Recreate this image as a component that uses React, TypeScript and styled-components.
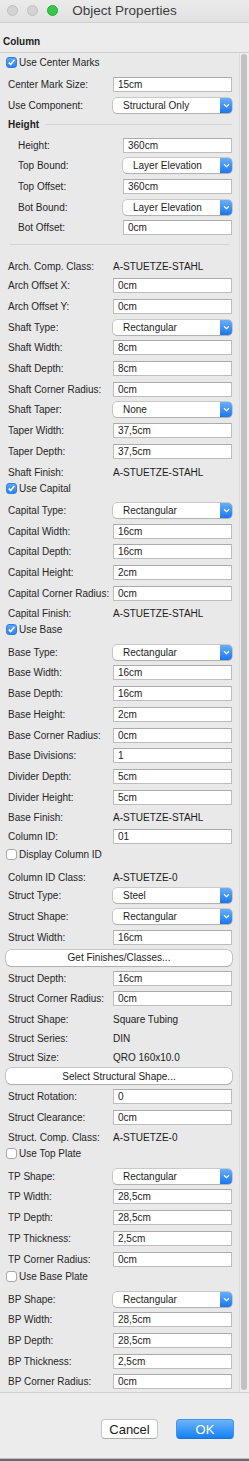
import React from 'react';
import styled, { createGlobalStyle } from 'styled-components';

const GlobalStyle = createGlobalStyle`
    html, body {
        margin: 0;
        padding: 0;
        background: #ececec;
    }
    body {
        font-family: 'Liberation Sans', Arial, sans-serif;
        color: #262626;
    }
`;

const Window = styled.div`
    width: 249px;
    height: 1461px;
    display: flex;
    flex-direction: column;
    background: #ececec;
    overflow: hidden;
`;

const TitleBar = styled.div`
    height: 23px;
    flex: none;
    box-sizing: border-box;
    display: grid;
    grid-template-columns: 1fr auto 1fr;
    align-items: center;
    background: linear-gradient(#ebebeb, #e1e1e1);
    border-bottom: 1px solid #cfcfcf;
`;

const Lights = styled.div`
    display: flex;
    gap: 9px;
    padding-left: 7px;
    padding-bottom: 1px;
`;

const Light = styled.span<{ $color: string; $edge: string }>`
    width: 11px;
    height: 11px;
    border-radius: 50%;
    box-sizing: border-box;
    background: ${(p) => p.$color};
    border: 1px solid ${(p) => p.$edge};
`;

const Title = styled.div`
    font-size: 13.5px;
    color: #3c3c3c;
    padding-bottom: 1px;
`;

const Header = styled.div`
    height: 29px;
    flex: none;
    box-sizing: border-box;
    display: flex;
    align-items: flex-end;
    padding: 0 0 4px 3px;
    font-size: 10px;
    line-height: 12px;
    font-weight: bold;
    color: #1e1e1e;
`;

const Panel = styled.div`
    flex: 1;
    min-height: 0;
    display: flex;
    background: #e9e9e9;
    border-top: 1px solid #d0d0d0;
    border-bottom: 1px solid #d0d0d0;
    overflow: hidden;
`;

const Content = styled.div`
    flex: 1;
    min-width: 0;
    display: flex;
    flex-direction: column;
    padding-top: 2px;
`;

const Track = styled.div`
    width: 10px;
    flex: none;
    box-sizing: border-box;
    border-left: 1px solid #dcdcdc;
    background: #eeeeee;
    padding: 1px 0 2px 1px;
    display: flex;
`;

const Thumb = styled.div`
    width: 6px;
    flex: none;
    border-radius: 3px;
    background: #c2c2c2;
`;

const Row = styled.div<{ $indent?: boolean }>`
    height: 20.7px;
    flex: none;
    display: flex;
    align-items: center;
    padding: 0 7px 0 ${(p) => (p.$indent ? 18 : 8)}px;
`;

const InfoRow = styled.div`
    height: 19px;
    flex: none;
    box-sizing: border-box;
    display: flex;
    align-items: center;
    padding: 2px 7px 0 8px;
`;

const Label = styled.span`
    flex: 0 0 105px;
    font-size: 10px;
    white-space: nowrap;
    color: #262626;
`;

const Value = styled.span`
    flex: 1;
    min-width: 0;
    font-size: 10px;
    color: #1c1c1c;
`;

const TextInput = styled.input`
    flex: 1;
    min-width: 0;
    width: 0;
    height: 15px;
    box-sizing: border-box;
    margin: 0;
    padding: 0 0 0 4px;
    border: 1px solid #bdbdbd;
    border-top-color: #ababab;
    background: #fff;
    font: 10px 'Liberation Sans', Arial, sans-serif;
    color: #1c1c1c;
    outline: none;
`;

const Select = styled.div`
    flex: 1;
    min-width: 0;
    height: 15px;
    display: flex;
    align-items: center;
    background: #fff;
    border-radius: 4px;
    box-shadow: 0 0 0 0.5px rgba(0, 0, 0, 0.28), 0 1px 1px rgba(0, 0, 0, 0.12);
    font-size: 10px;
    color: #1c1c1c;
`;

const SelectText = styled.span`
    flex: 1;
    min-width: 0;
    padding-left: 10px;
    white-space: nowrap;
`;

const SelectArrow = styled.span`
    width: 12px;
    flex: none;
    align-self: stretch;
    display: flex;
    align-items: center;
    justify-content: center;
    border-radius: 0 4px 4px 0;
    background: linear-gradient(#67affa, #1c76ec);
`;

const CheckRow = styled.label`
    height: 19.5px;
    flex: none;
    box-sizing: border-box;
    display: flex;
    align-items: flex-start;
    padding: 1px 0 0 6px;
    font-size: 10px;
    line-height: 13px;
    color: #262626;
`;

const Box = styled.span<{ $checked: boolean }>`
    width: 11px;
    height: 11px;
    margin: 1px 2px 0 0;
    box-sizing: border-box;
    border-radius: 3px;
    display: flex;
    align-items: center;
    justify-content: center;
    background: ${(p) => (p.$checked ? 'linear-gradient(#58a6fa, #2e82f3)' : '#fff')};
    border: 1px solid ${(p) => (p.$checked ? '#2f7fe6' : '#a8a8a8')};
`;

const Heading = styled.div`
    height: 19px;
    flex: none;
    box-sizing: border-box;
    display: flex;
    align-items: center;
    gap: 6px;
    padding: 0 7px 2px 8px;
    font-size: 10px;
    font-weight: bold;
    color: #1e1e1e;
`;

const HeadingLine = styled.span`
    flex: 1;
    height: 1px;
    background: #d6d6d6;
`;

const Divider = styled.div`
    flex: none;
    height: 1px;
    margin: 6px 10px 11px;
    background: #d3d3d3;
`;

const ButtonRow = styled.div`
    height: 20px;
    flex: none;
    display: flex;
    align-items: center;
    padding: 0 7px 0 6px;
`;

const WideButton = styled.button`
    flex: 1;
    min-width: 0;
    height: 16px;
    margin: 0;
    padding: 0;
    border: none;
    border-radius: 5px;
    background: #fff;
    box-shadow: 0 0 0 0.5px rgba(0, 0, 0, 0.3), 0 1px 1px rgba(0, 0, 0, 0.12);
    font: 10px 'Liberation Sans', Arial, sans-serif;
    color: #1c1c1c;
`;

const Footer = styled.div`
    height: 66px;
    flex: none;
    box-sizing: border-box;
    display: flex;
    justify-content: flex-end;
    align-items: flex-start;
    gap: 18px;
    padding: 26px 15px 0 0;
    border-bottom: 1px solid #bdbdbd;
`;

const DialogButton = styled.button<{ $primary?: boolean }>`
    width: ${(p) => (p.$primary ? 58 : 57)}px;
    height: 20px;
    margin: 0;
    padding: 0;
    border-radius: 4px;
    font: 13px 'Liberation Sans', Arial, sans-serif;
    color: ${(p) => (p.$primary ? '#fff' : '#1a1a1a')};
    background: ${(p) => (p.$primary ? 'linear-gradient(#6cb4fb, #1580f6)' : '#fff')};
    border: 1px solid ${(p) => (p.$primary ? '#3f92f2' : '#c6c6c6')};
    border-bottom-color: ${(p) => (p.$primary ? '#1f6fd6' : '#ababab')};
`;

const DesktopEdge = styled.div`
    height: 2px;
    flex: none;
    background: #6a6a6a;
`;

type Item =
    | { kind: 'field'; label: string; value: string; indent?: boolean }
    | { kind: 'select'; label: string; value: string; indent?: boolean }
    | { kind: 'info'; label: string; value: string }
    | { kind: 'check'; label: string; checked: boolean }
    | { kind: 'button'; label: string }
    | { kind: 'heading'; label: string }
    | { kind: 'divider' };

const items: Item[] = [
    { kind: 'check', label: 'Use Center Marks', checked: true },
    { kind: 'field', label: 'Center Mark Size:', value: '15cm' },
    { kind: 'select', label: 'Use Component:', value: 'Structural Only' },
    { kind: 'heading', label: 'Height' },
    { kind: 'field', label: 'Height:', value: '360cm', indent: true },
    { kind: 'select', label: 'Top Bound:', value: 'Layer Elevation', indent: true },
    { kind: 'field', label: 'Top Offset:', value: '360cm', indent: true },
    { kind: 'select', label: 'Bot Bound:', value: 'Layer Elevation', indent: true },
    { kind: 'field', label: 'Bot Offset:', value: '0cm', indent: true },
    { kind: 'divider' },
    { kind: 'info', label: 'Arch. Comp. Class:', value: 'A-STUETZE-STAHL' },
    { kind: 'field', label: 'Arch Offset X:', value: '0cm' },
    { kind: 'field', label: 'Arch Offset Y:', value: '0cm' },
    { kind: 'select', label: 'Shaft Type:', value: 'Rectangular' },
    { kind: 'field', label: 'Shaft Width:', value: '8cm' },
    { kind: 'field', label: 'Shaft Depth:', value: '8cm' },
    { kind: 'field', label: 'Shaft Corner Radius:', value: '0cm' },
    { kind: 'select', label: 'Shaft Taper:', value: 'None' },
    { kind: 'field', label: 'Taper Width:', value: '37,5cm' },
    { kind: 'field', label: 'Taper Depth:', value: '37,5cm' },
    { kind: 'info', label: 'Shaft Finish:', value: 'A-STUETZE-STAHL' },
    { kind: 'check', label: 'Use Capital', checked: true },
    { kind: 'select', label: 'Capital Type:', value: 'Rectangular' },
    { kind: 'field', label: 'Capital Width:', value: '16cm' },
    { kind: 'field', label: 'Capital Depth:', value: '16cm' },
    { kind: 'field', label: 'Capital Height:', value: '2cm' },
    { kind: 'field', label: 'Capital Corner Radius:', value: '0cm' },
    { kind: 'info', label: 'Capital Finish:', value: 'A-STUETZE-STAHL' },
    { kind: 'check', label: 'Use Base', checked: true },
    { kind: 'select', label: 'Base Type:', value: 'Rectangular' },
    { kind: 'field', label: 'Base Width:', value: '16cm' },
    { kind: 'field', label: 'Base Depth:', value: '16cm' },
    { kind: 'field', label: 'Base Height:', value: '2cm' },
    { kind: 'field', label: 'Base Corner Radius:', value: '0cm' },
    { kind: 'field', label: 'Base Divisions:', value: '1' },
    { kind: 'field', label: 'Divider Depth:', value: '5cm' },
    { kind: 'field', label: 'Divider Height:', value: '5cm' },
    { kind: 'info', label: 'Base Finish:', value: 'A-STUETZE-STAHL' },
    { kind: 'field', label: 'Column ID:', value: '01' },
    { kind: 'check', label: 'Display Column ID', checked: false },
    { kind: 'info', label: 'Column ID Class:', value: 'A-STUETZE-0' },
    { kind: 'select', label: 'Struct Type:', value: 'Steel' },
    { kind: 'select', label: 'Struct Shape:', value: 'Rectangular' },
    { kind: 'field', label: 'Struct Width:', value: '16cm' },
    { kind: 'button', label: 'Get Finishes/Classes...' },
    { kind: 'field', label: 'Struct Depth:', value: '16cm' },
    { kind: 'field', label: 'Struct Corner Radius:', value: '0cm' },
    { kind: 'info', label: 'Struct Shape:', value: 'Square Tubing' },
    { kind: 'info', label: 'Struct Series:', value: 'DIN' },
    { kind: 'info', label: 'Struct Size:', value: 'QRO 160x10.0' },
    { kind: 'button', label: 'Select Structural Shape...' },
    { kind: 'field', label: 'Struct Rotation:', value: '0' },
    { kind: 'field', label: 'Struct Clearance:', value: '0cm' },
    { kind: 'info', label: 'Struct. Comp. Class:', value: 'A-STUETZE-0' },
    { kind: 'check', label: 'Use Top Plate', checked: false },
    { kind: 'select', label: 'TP Shape:', value: 'Rectangular' },
    { kind: 'field', label: 'TP Width:', value: '28,5cm' },
    { kind: 'field', label: 'TP Depth:', value: '28,5cm' },
    { kind: 'field', label: 'TP Thickness:', value: '2,5cm' },
    { kind: 'field', label: 'TP Corner Radius:', value: '0cm' },
    { kind: 'check', label: 'Use Base Plate', checked: false },
    { kind: 'select', label: 'BP Shape:', value: 'Rectangular' },
    { kind: 'field', label: 'BP Width:', value: '28,5cm' },
    { kind: 'field', label: 'BP Depth:', value: '28,5cm' },
    { kind: 'field', label: 'BP Thickness:', value: '2,5cm' },
    { kind: 'field', label: 'BP Corner Radius:', value: '0cm' },
];

function Chevron() {
    return (
        <svg width="7" height="5" viewBox="0 0 7 5">
            <path d="M1 1.2 L3.5 3.7 L6 1.2" fill="none" stroke="#fff" strokeWidth="1.3" />
        </svg>
    );
}

function Tick() {
    return (
        <svg width="9" height="9" viewBox="0 0 9 9">
            <path d="M1.8 4.6 L3.7 6.6 L7.3 2.1" fill="none" stroke="#fff" strokeWidth="1.6" />
        </svg>
    );
}

function renderItem(item: Item, i: number) {
    switch (item.kind) {
        case 'field':
            return (
                <Row key={i} $indent={item.indent}>
                    <Label>{item.label}</Label>
                    <TextInput readOnly value={item.value} />
                </Row>
            );
        case 'select':
            return (
                <Row key={i} $indent={item.indent}>
                    <Label>{item.label}</Label>
                    <Select>
                        <SelectText>{item.value}</SelectText>
                        <SelectArrow>
                            <Chevron />
                        </SelectArrow>
                    </Select>
                </Row>
            );
        case 'info':
            return (
                <InfoRow key={i}>
                    <Label>{item.label}</Label>
                    <Value>{item.value}</Value>
                </InfoRow>
            );
        case 'check':
            return (
                <CheckRow key={i}>
                    <Box $checked={item.checked}>{item.checked && <Tick />}</Box>
                    {item.label}
                </CheckRow>
            );
        case 'button':
            return (
                <ButtonRow key={i}>
                    <WideButton>{item.label}</WideButton>
                </ButtonRow>
            );
        case 'heading':
            return (
                <Heading key={i}>
                    {item.label}
                    <HeadingLine />
                </Heading>
            );
        case 'divider':
            return <Divider key={i} />;
    }
}

export default function App() {
    return (
        <>
            <GlobalStyle />
            <Window>
                <TitleBar>
                    <Lights>
                        <Light $color="#d3d3d3" $edge="#c0c0c0" />
                        <Light $color="#d3d3d3" $edge="#c0c0c0" />
                        <Light $color="#35c84a" $edge="#27a93a" />
                    </Lights>
                    <Title>Object Properties</Title>
                </TitleBar>
                <Header>Column</Header>
                <Panel>
                    <Content>{items.map(renderItem)}</Content>
                    <Track>
                        <Thumb />
                    </Track>
                </Panel>
                <Footer>
                    <DialogButton>Cancel</DialogButton>
                    <DialogButton $primary>OK</DialogButton>
                </Footer>
                <DesktopEdge />
            </Window>
        </>
    );
}
